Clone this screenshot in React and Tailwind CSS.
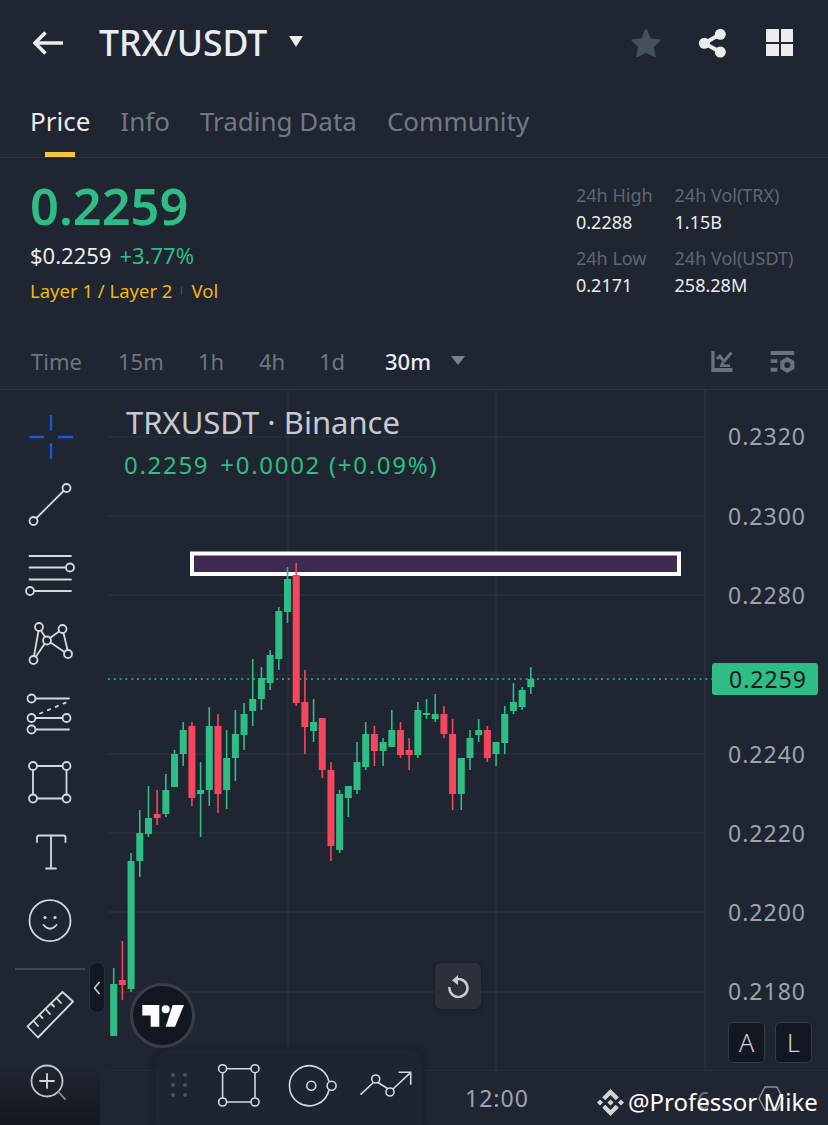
import React from "react";

const green = "#2ebd85";
const red = "#f6465d";

// [wickTop, bodyTop, bodyBottom, wickBottom, isRed]
const candles = [
  [968, 984, 1036, 1036, 0],
  [941, 980, 985, 1000, 1],
  [853, 861, 989, 992, 0],
  [810, 833, 861, 877, 0],
  [786, 818, 834, 837, 0],
  [790, 814, 818, 825, 1],
  [774, 790, 814, 817, 0],
  [750, 754, 787, 787, 0],
  [722, 730, 754, 766, 0],
  [722, 726, 798, 806, 1],
  [762, 790, 794, 837, 0],
  [707, 726, 790, 806, 0],
  [714, 726, 794, 813, 1],
  [730, 758, 790, 809, 0],
  [710, 734, 758, 781, 0],
  [703, 714, 735, 750, 0],
  [659, 699, 711, 726, 0],
  [667, 678, 699, 710, 0],
  [650, 655, 683, 690, 0],
  [607, 611, 659, 670, 0],
  [567, 579, 612, 623, 0],
  [563, 575, 703, 706, 1],
  [670, 702, 727, 754, 1],
  [699, 722, 731, 742, 0],
  [718, 718, 770, 778, 1],
  [762, 770, 846, 861, 1],
  [790, 794, 850, 853, 0],
  [786, 786, 798, 817, 0],
  [742, 762, 790, 794, 0],
  [722, 734, 767, 770, 0],
  [726, 734, 751, 766, 1],
  [738, 742, 751, 766, 0],
  [710, 730, 747, 747, 0],
  [722, 730, 755, 758, 1],
  [738, 750, 755, 770, 1],
  [702, 710, 755, 758, 0],
  [699, 713, 715, 719, 0],
  [694, 714, 719, 722, 0],
  [706, 714, 734, 738, 1],
  [719, 734, 794, 810, 1],
  [758, 758, 794, 810, 0],
  [730, 738, 758, 770, 0],
  [719, 730, 735, 742, 0],
  [726, 730, 758, 762, 1],
  [742, 742, 754, 766, 0],
  [706, 714, 743, 754, 0],
  [683, 702, 711, 714, 0],
  [687, 690, 707, 710, 0],
  [667, 679, 687, 694, 0],
];

const gridY = [437, 516, 595, 675, 754, 833, 912, 992, 1071];
const prices = ["0.2320", "0.2300", "0.2280", "", "0.2240", "0.2220", "0.2200", "0.2180"];

function Chart() {
  return (
    <svg className="absolute inset-0 w-full h-full" viewBox="100 390 728 681">
      {gridY.map((y) => (
        <line key={y} x1="108" x2={y === 1071 ? 828 : 705} y1={y} y2={y} stroke="#2b303b" strokeWidth="1.5" />
      ))}
      {[288, 496, 705].map((x) => (
        <line key={x} x1={x} x2={x} y1="390" y2="1071" stroke="#2b303b" strokeWidth="1.5" />
      ))}
      <line x1="108" x2="712" y1="679" y2="679" stroke={green} strokeWidth="1.6" strokeDasharray="2 3.8" />
      <rect x="192" y="553.5" width="487" height="20.5" fill="#3f2a52" stroke="#ffffff" strokeWidth="4" />
      {candles.map(([wt, bt, bb, wb, isRed], i) => {
        const x = 113.7 + i * 8.69;
        const c = isRed ? red : green;
        return (
          <g key={i}>
            <rect x={x - 0.8} y={wt} width="1.6" height={wb - wt} fill={c} />
            <rect x={x - 3.5} y={bt} width="7" height={Math.max(bb - bt, 2)} fill={c} />
          </g>
        );
      })}
    </svg>
  );
}

function Tool({ top, h = 69.5, children }) {
  return (
    <svg
      width="100"
      height={h}
      viewBox={`0 ${top} 100 ${h}`}
      fill="none"
      stroke="#d5d8de"
      strokeWidth="1.8"
      strokeLinecap="round"
      className="block shrink-0"
    >
      {children}
    </svg>
  );
}

function Toolbar() {
  return (
    <div className="w-[100px] shrink-0 pt-[11.5px] h-full bg-gradient-to-b from-[#1f2531] from-[92%] to-[#14171f]">
      <Tool top={401.5}>
        <path d="M51 414.5V430M51 443V458M29.5 436.5H44M58 436.5H73" stroke="#1d56de" strokeWidth="2.4" strokeLinecap="butt" />
      </Tool>
      <Tool top={471}>
        <circle cx="66.5" cy="488" r="4" />
        <circle cx="33.5" cy="521" r="4" />
        <path d="M63.5 491L36.5 518" />
      </Tool>
      <Tool top={540.5}>
        <path d="M29.5 555.5H71M29.5 567H66M29.5 579H71M34 590.5H71" />
        <circle cx="70" cy="567" r="4" />
        <circle cx="30" cy="590.5" r="4" />
      </Tool>
      <Tool top={610}>
        <circle cx="39" cy="627" r="4" />
        <circle cx="62.5" cy="629" r="4" />
        <circle cx="47" cy="640.5" r="4" />
        <circle cx="68" cy="654" r="4" />
        <circle cx="33.5" cy="660" r="4" />
        <path d="M38.5 631L34 656M41 630.5L45 637M50 638L59 631.5M63.5 633L67.5 650M50.5 642.5L64.5 652M44.5 644L36 656.5" />
      </Tool>
      <Tool top={679.5}>
        <circle cx="31.5" cy="698" r="4" />
        <path d="M35.5 698H69" />
        <path d="M40 713L66 702" strokeDasharray="2.5 6" />
        <circle cx="31.5" cy="717.5" r="4" />
        <circle cx="66.5" cy="717.5" r="4" />
        <path d="M35.5 717.5H62.5" />
        <circle cx="31.5" cy="729" r="4" />
        <path d="M35.5 729H69" />
      </Tool>
      <Tool top={749}>
        <circle cx="33" cy="766" r="4" />
        <circle cx="66.5" cy="766" r="4" />
        <circle cx="33" cy="798.5" r="4" />
        <circle cx="66.5" cy="798.5" r="4" />
        <path d="M37 766H62.5M37 798.5H62.5M33 770V794.5M66.5 770V794.5" />
      </Tool>
      <Tool top={818.5}>
        <path d="M37 841.5V837Q37 835 39 835H63.5Q65.5 835 65.5 837V841.5M51 835V868M46 868H56" />
      </Tool>
      <Tool top={888}>
        <circle cx="50" cy="920.7" r="20.5" />
        <circle cx="45" cy="917.5" r="1.6" fill="#d5d8de" stroke="none" />
        <circle cx="55" cy="917.5" r="1.6" fill="#d5d8de" stroke="none" />
        <path d="M43.5 925Q50 932.5 56.5 925" />
      </Tool>
      <div className="mx-[15px] mt-[10.5px] mb-[10px] h-[2px] bg-[#41454f]" />
      <Tool top={980} h={68}>
        <path d="M27.5 1026.5L62.5 992L73 1001.5L38 1037.5Z" strokeLinejoin="round" />
        <path d="M33.5 1021L38 1026M39.5 1015L42.5 1018M45.5 1009L50 1014M51 1003.5L54 1006.5M56.5 998L61 1003" />
      </Tool>
      <Tool top={1048} h={68}>
        <circle cx="47" cy="1081" r="15.5" stroke="#c3c6cc" />
        <path d="M40 1081H54M47 1074V1088" />
        <path d="M58.5 1092L65 1099" stroke="#8b8e95" />
      </Tool>
    </div>
  );
}

export default function App() {
  const row = "flex items-center";
  return (
    <div
      className="relative w-[828px] h-[1125px] overflow-hidden bg-[#1f2531] text-[#eaecef] flex flex-col"
      style={{ fontFamily: "'Noto Sans', Roboto, sans-serif" }}
    >
      {/* top bar */}
      <div className="h-[85px] shrink-0 flex items-center pl-[33px] pr-[35px]">
        <svg width="30" height="24" viewBox="33 30 30 24" fill="none" stroke="#eaecef" strokeWidth="3.6">
          <path d="M63 42H36M45.5 31.5L35 42L45.5 52.5" />
        </svg>
        <div className="ml-[36px] text-[35.5px] font-medium leading-none">TRX/USDT</div>
        <div className="ml-[22px] mb-[2px] w-0 h-0 border-x-[7.5px] border-x-transparent border-t-[11px] border-t-[#eaecef]" />
        <svg className="ml-auto" width="30" height="30" viewBox="630 27 30 30" fill="#464f5c" stroke="#464f5c" strokeWidth="1.5" strokeLinejoin="round">
          <path d="M645 28.5L649.2 38L659 39.2L652 46L654 55.5L645 51L636 55.5L638 46L631 39.2L640.8 38Z" />
        </svg>
        <svg className="ml-[36.5px]" width="30" height="30" viewBox="697 27 30 30" fill="#eaecef" stroke="#eaecef" strokeWidth="0">
          <circle cx="703.3" cy="42.3" r="5.5" />
          <circle cx="719.3" cy="33.3" r="5.5" />
          <circle cx="719.3" cy="51" r="5.5" />
          <path d="M703.3 42.3L719.3 33.3M703.3 42.3L719.3 51" strokeWidth="4" />
        </svg>
        <div className="ml-[38.5px] grid grid-cols-2 gap-[2px]">
          <div className="w-[12.5px] h-[12.5px] bg-[#eaecef]" />
          <div className="w-[12.5px] h-[12.5px] bg-[#eaecef]" />
          <div className="w-[12.5px] h-[12.5px] bg-[#eaecef]" />
          <div className="w-[12.5px] h-[12.5px] bg-[#eaecef]" />
        </div>
      </div>

      {/* tabs */}
      <div className="h-[73px] shrink-0 border-b border-[#2e333e] pl-[30px] flex items-start pt-[18px] text-[26px] leading-[36px] text-[#727985] gap-[30px]">
        <div className="relative text-[#eaecef]">
          Price
          <div className="absolute left-[15px] top-[49px] w-[30px] h-[5px] bg-[#f5c63c]" />
        </div>
        <div>Info</div>
        <div>Trading Data</div>
        <div>Community</div>
      </div>

      {/* price summary */}
      <div className="h-[157px] shrink-0 pl-[30px] flex">
        <div className="w-[546px]">
          <div className="mt-[20px] text-[50.5px] leading-[56px] font-semibold" style={{ color: green }}>0.2259</div>
          <div className={`${row} mt-[7px] text-[22px] leading-[28px] gap-[8px]`}>
            <span>$0.2259</span>
            <span style={{ color: green }}>+3.77%</span>
          </div>
          <div className={`${row} mt-[10px] text-[18.5px] leading-[24px] text-[#f0b90b]`}>
            <span>Layer 1 / Layer 2</span>
            <span className="mx-[9px] w-[1px] h-[8px] bg-[#474d57]" />
            <span>Vol</span>
          </div>
        </div>
        <div className="flex gap-[22px] mt-[24px] text-[18px] leading-[27px]">
          <div>
            <div className="text-[#5f6673]">24h High</div>
            <div>0.2288</div>
            <div className="mt-[9px] text-[#5f6673]">24h Low</div>
            <div>0.2171</div>
          </div>
          <div>
            <div className="text-[#5f6673]">24h Vol(TRX)</div>
            <div>1.15B</div>
            <div className="mt-[9px] text-[#5f6673]">24h Vol(USDT)</div>
            <div>258.28M</div>
          </div>
        </div>
      </div>

      {/* interval row */}
      <div className="h-[75px] shrink-0 border-b border-[#2e333e] pl-[31px] pr-[32px] flex items-center text-[22px] text-[#6f7580] pt-[19px]">
        <span className="w-[87px]">Time</span>
        <span className="w-[80px]">15m</span>
        <span className="w-[61px]">1h</span>
        <span className="w-[60px]">4h</span>
        <span className="w-[66px]">1d</span>
        <span className="text-[#eaecef] font-medium">30m</span>
        <div className="ml-[20px] mb-[3px] w-0 h-0 border-x-[7px] border-x-transparent border-t-[9px] border-t-[#7b818c]" />
        <svg className="ml-auto" width="24" height="24" viewBox="712 349 24 24" fill="#6b727e" stroke="none">
          <path d="M713.3 350H716.6V367H734.5V371H713.3Z" />
          <path d="M718 356.5L722 353L726 358L732.5 350.5L734.5 352.5L726.5 362L721.5 357.5L719.5 359Z" />
          <path d="M724 360L727 363.5H732V366H721.5Z" />
        </svg>
        <svg className="ml-[36px]" width="26" height="24" viewBox="771 349 26 24" fill="#6b727e">
          <rect x="771.7" y="350" width="23.5" height="4" />
          <rect x="771.7" y="358.3" width="6.6" height="3.6" />
          <rect x="771.7" y="366.7" width="6.6" height="4" />
          <path fillRule="evenodd" d="M788.3 356L795.3 360V368L788.3 372L781.3 368V360ZM788.3 361A3 3 0 1 0 788.3 367A3 3 0 1 0 788.3 361Z" />
        </svg>
      </div>

      {/* chart */}
      <div className="flex flex-1 min-h-0">
        <Toolbar />
        <div className="flex-1 flex flex-col min-w-0">
          <div className="relative h-[681px] shrink-0 flex">
            <Chart />
            <div className="relative pl-[26px] pt-[14px] h-full">
              <div className="text-[31px] leading-[36px] text-[#c6cad1] whitespace-nowrap">TRXUSDT · Binance</div>
              <div className="mt-[9px] -ml-[2px] text-[24px] leading-[32px] tracking-[1.7px] flex gap-[11px] whitespace-nowrap" style={{ color: green }}>
                <span>0.2259</span>
                <span>+0.0002 (+0.09%)</span>
              </div>
            </div>
            <div className="relative ml-auto w-[100px] h-full pt-[7px] text-[23px] tracking-[1px] text-[#9ea3ae]">
              {prices.map((p, i) => (
                <div key={i} className="h-[79.3px] flex items-center">{p}</div>
              ))}
            </div>
          </div>
          <div className="flex-1 flex items-center pl-[365px] text-[23px] tracking-[1px] text-[#9ea3ae]">12:00</div>
        </div>
      </div>

      {/* overlays */}
      <div className="absolute left-[712px] top-[663px] w-[106px] h-[32px] pl-[17px] rounded-[3px] bg-[#2ebd85] text-[#14181f] text-[23px] tracking-[1px] flex items-center">0.2259</div>

      <div className="absolute left-[89px] top-[962px] w-[16px] h-[51px] rounded-[8px] bg-[#131722] border border-[#2a2e39] flex items-center justify-center">
        <svg width="8" height="14" viewBox="0 0 8 14" fill="none" stroke="#c8ccd3" strokeWidth="1.6">
          <path d="M6.5 1L1.5 7L6.5 13" />
        </svg>
      </div>

      <div className="absolute left-[130px] top-[983px] w-[65px] h-[65px] rounded-full bg-[#131722] border-[3px] border-[#3a3d47] flex items-center justify-center">
        <svg width="42" height="22" viewBox="142 1005 42 22" fill="#ffffff">
          <path d="M142.3 1005H159.3V1026.7H150.7V1015.5H142.3Z" />
          <circle cx="165.7" cy="1009.3" r="4" />
          <path d="M172.7 1005H184L175 1026.7H165.7Z" />
        </svg>
      </div>

      <div className="absolute left-[435px] top-[963px] w-[46px] h-[46px] rounded-[6px] bg-[#2b303b] shadow-[0_1px_4px_rgba(0,0,0,0.3)] flex items-center justify-center">
        <svg width="24" height="24" viewBox="0 0 24 24" fill="none" stroke="#c6cad1" strokeWidth="2.6">
          <path d="M7.5 6.5A9 9 0 1 1 3.5 13" />
          <path d="M12 1L6 6.5L12 11Z" fill="#c6cad1" stroke="none" />
        </svg>
      </div>

      <div className="absolute left-[728px] top-[1022px] flex gap-[10px]">
        <div className="w-[37px] h-[41px] rounded-[5px] bg-[#131722] border border-[#363a45] flex items-center justify-center text-[25px] font-light text-[#d0d3d9]">A</div>
        <div className="w-[37px] h-[41px] rounded-[5px] bg-[#131722] border border-[#363a45] flex items-center justify-center text-[25px] font-light text-[#d0d3d9]">L</div>
      </div>

      {/* floating drawing bar */}
      <div className="absolute left-[156px] top-[1050px] w-[266px] h-[75px] rounded-t-[12px] bg-[#1e2430] shadow-[0_0_10px_rgba(0,0,0,0.25)] flex items-center pb-[5px] pl-[15px]">
        <div className="grid grid-cols-2 gap-x-[8px] gap-y-[6px]">
          {[0, 1, 2, 3, 4, 5].map((i) => (
            <div key={i} className="w-[4px] h-[4px] rounded-full bg-[#4b505b]" />
          ))}
        </div>
        <svg className="ml-[29px]" width="200" height="60" viewBox="216 1057 200 60" fill="none" stroke="#d5d8de" strokeWidth="1.6">
          <circle cx="222.6" cy="1070.7" r="4" />
          <circle cx="255" cy="1070.7" r="4" />
          <circle cx="222.6" cy="1104" r="4" />
          <circle cx="255" cy="1104" r="4" />
          <path d="M226.6 1070.7H251M226.6 1104H251M222.6 1074.7V1100M255 1074.7V1100" />
          <path d="M329 1083.5A20 20 0 1 0 329 1092" />
          <circle cx="311.3" cy="1087.7" r="4.5" />
          <circle cx="331.6" cy="1087.7" r="4.5" />
          <path d="M360.5 1096.7L373.5 1084.5M378 1084.5L387.5 1090.5M393 1091L410.7 1074.3M398.6 1074.3H410.7V1086.7" />
          <circle cx="375.7" cy="1081" r="4" />
          <circle cx="390" cy="1094" r="4" />
        </svg>
      </div>

      {/* what is left of the time axis under the watermark */}
      <div className="absolute left-[697px] top-[1083px] text-[23px] text-[#6f7580]">6</div>
      <svg className="absolute left-[758px] top-[1085px]" width="26" height="27" viewBox="0 0 26 27" fill="none" stroke="#8b9099" strokeWidth="1.5">
        <path d="M7 2H19L25 13.5L19 25H7L1 13.5Z" />
      </svg>

      {/* watermark */}
      <div className="absolute left-[597px] top-[1087px] flex items-center gap-[4px] text-[24px] leading-[30px] text-white">
        <svg width="27" height="27" viewBox="0 0 126.6 126.6" fill="#d2d4d8">
          <path d="M38.73 53.2l24.59-24.58 24.6 24.6 14.3-14.31L63.32 0 24.42 38.9zM0 63.31l14.3-14.31 14.31 14.31-14.31 14.3zM38.73 73.41l24.59 24.59 24.6-24.6 14.31 14.29-38.9 38.91-38.91-38.88v-.03zM98 63.31l14.3-14.31 14.31 14.3-14.31 14.32zM77.83 63.3L63.32 48.78 52.59 59.51l-1.24 1.23-2.54 2.54 14.51 14.5 14.51-14.47z" />
        </svg>
        <span>@Professor Mike</span>
      </div>
    </div>
  );
}
